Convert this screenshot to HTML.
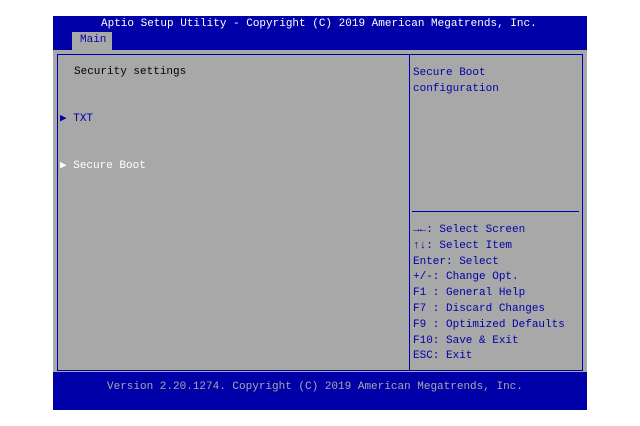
<!DOCTYPE html>
<html><head><style>
body{margin:0;width:640px;height:426px;background:#fff;position:relative;overflow:hidden;font-family:"Liberation Mono","DejaVu Sans Mono",monospace;font-size:11px;}
.a{position:absolute;white-space:pre;line-height:13px;}
.blue{background:#0000a8;}
</style></head><body>
<div class="a blue" style="left:53px;top:16px;width:534px;height:394px;"></div>
<div class="a" style="left:53px;top:50px;width:534px;height:322px;background:#a8a8a8;"></div>
<div class="a" style="left:57px;top:54px;width:524px;height:315px;border:1px solid #0000a8;"></div>
<div class="a" style="left:409px;top:54px;width:1px;height:317px;background:#0000a8;"></div>
<div class="a" style="left:412px;top:211px;width:167px;height:1px;background:#0000a8;"></div>
<div class="a" style="left:72px;top:32px;width:40px;height:18px;background:#a8a8a8;"></div>
<div class="a" style="left:101px;top:18px;color:#fff;">Aptio Setup Utility - Copyright (C) 2019 American Megatrends, Inc.</div>
<div class="a" style="left:80px;top:34px;color:#0000a8;">Main</div>
<div class="a" style="left:74px;top:66px;color:#000;">Security settings</div>
<div class="a" style="left:60px;top:113px;color:#0000a8;">▶ TXT</div>
<div class="a" style="left:60px;top:160px;color:#fff;">▶ Secure Boot</div>
<div class="a" style="left:413px;top:66px;color:#0000a8;line-height:15.8px;">Secure Boot
configuration</div>
<div class="a" style="left:413px;top:223px;color:#0000a8;line-height:15.8px;">→←: Select Screen
↑↓: Select Item
Enter: Select
+/-: Change Opt.
F1 : General Help
F7 : Discard Changes
F9 : Optimized Defaults
F10: Save &amp; Exit
ESC: Exit</div>
<div class="a" style="left:107px;top:381px;color:#a8a8a8;">Version 2.20.1274. Copyright (C) 2019 American Megatrends, Inc.</div>
</body></html>
